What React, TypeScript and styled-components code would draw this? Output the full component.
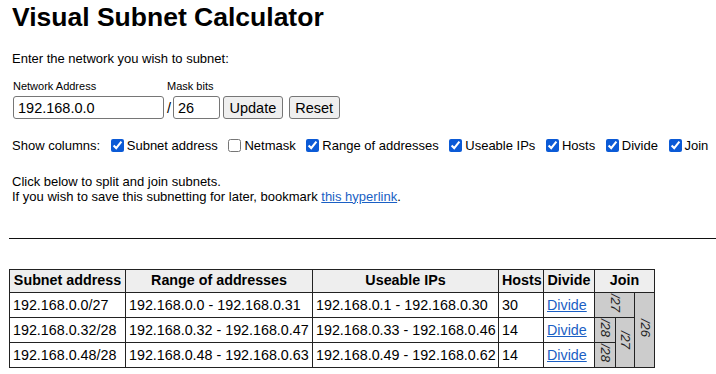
import React, { useState } from 'react';
import styled, { createGlobalStyle } from 'styled-components';

const GlobalStyle = createGlobalStyle`
  html, body {
    margin: 0;
    padding: 0;
    background: #fff;
    color: #000;
    font-family: "Liberation Sans", Arial, sans-serif;
  }
`;

const Page = styled.div`
  padding: 2px 0 0 9px;
`;

const Intro = styled.div`
  padding-left: 3px;
`;

const Title = styled.h1`
  margin: 0;
  font-size: 26.5px;
  line-height: 30px;
  font-weight: bold;
`;

const Para = styled.p<{ $top: number }>`
  margin: ${(p) => p.$top}px 0 0;
  font-size: 13px;
  line-height: 15px;
`;

const FormRow = styled.div`
  display: flex;
  align-items: flex-end;
  margin-top: 14px;
  padding-left: 1px;
`;

const Field = styled.div`
  display: flex;
  flex-direction: column;
`;

const FieldLabel = styled.label<{ $indent?: number }>`
  font-size: 11px;
  line-height: 13px;
  margin-bottom: 3.5px;
  padding-left: ${(p) => p.$indent ?? 0}px;
`;

const InputLine = styled.div`
  display: flex;
  align-items: center;
`;

const Slash = styled.span`
  font-size: 14.5px;
  width: 8px;
  margin-left: 1px;
  text-align: center;
`;

const TextInput = styled.input<{ $w: number }>`
  box-sizing: border-box;
  width: ${(p) => p.$w}px;
  height: 23px;
  padding: 0 4px;
  border: 1px solid #767676;
  border-radius: 3px;
  font-family: "Liberation Sans", Arial, sans-serif;
  font-size: 14.5px;
  color: #000;
  background: #fff;
`;

const Button = styled.button<{ $gap: number }>`
  box-sizing: border-box;
  height: 23px;
  margin-left: ${(p) => p.$gap}px;
  padding: 0 5.5px;
  border: 1px solid #767676;
  border-radius: 3px;
  background: #efefef;
  font-family: "Liberation Sans", Arial, sans-serif;
  font-size: 14.5px;
  color: #000;
`;

const ColumnsRow = styled.div`
  display: flex;
  align-items: center;
  margin-top: 19px;
  font-size: 13px;
  line-height: 15px;
`;

const Option = styled.label`
  display: flex;
  align-items: center;
  margin-left: 10.6px;
`;

const Check = styled.input`
  width: 13px;
  height: 13px;
  margin: 0 3px 0 0;
  accent-color: #0b5ad6;
`;

const Link = styled.a`
  color: #1a5fc4;
  text-decoration: underline;
`;

const Rule = styled.hr`
  margin: 34.5px 0 0;
  border: 0;
  border-top: 1px solid #111;
  height: 0;
`;

const Table = styled.table`
  margin-top: 30px;
  border-collapse: collapse;
  table-layout: fixed;
  width: 646px;
  font-size: 14.3px;
  line-height: 17px;
`;

const Head = styled.th`
  background: #eeeeee;
  border: 1px solid #222;
  padding: 2px 3px 3px;
  font-weight: bold;
  text-align: center;
  white-space: nowrap;
`;

const Cell = styled.td`
  border: 1px solid #222;
  padding: 4px 3px 3px;
  white-space: nowrap;
`;

const JoinCell = styled.td`
  background: #cccccc;
  border: 1px solid #222;
  padding: 0;
  text-align: center;
  vertical-align: middle;
`;

const Vertical = styled.span`
  display: inline-block;
  writing-mode: vertical-rl;
  font-size: 13px;
  font-style: italic;
  line-height: 14px;
  color: #222;
`;

const options = [
  { label: 'Subnet address', on: true },
  { label: 'Netmask', on: false },
  { label: 'Range of addresses', on: true },
  { label: 'Useable IPs', on: true },
  { label: 'Hosts', on: true },
  { label: 'Divide', on: true },
  { label: 'Join', on: true },
];

const colWidths = [116, 187, 186, 45, 51, 21, 19, 20];

const subnets = [
  { net: '192.168.0.0/27', range: '192.168.0.0 - 192.168.0.31', usable: '192.168.0.1 - 192.168.0.30', hosts: 30 },
  { net: '192.168.0.32/28', range: '192.168.0.32 - 192.168.0.47', usable: '192.168.0.33 - 192.168.0.46', hosts: 14 },
  { net: '192.168.0.48/28', range: '192.168.0.48 - 192.168.0.63', usable: '192.168.0.49 - 192.168.0.62', hosts: 14 },
];

const App: React.FC = () => {
  const [network, setNetwork] = useState('192.168.0.0');
  const [mask, setMask] = useState('26');

  const joins = [
    <>
      <JoinCell colSpan={2}><Vertical>/27</Vertical></JoinCell>
      <JoinCell rowSpan={3}><Vertical>/26</Vertical></JoinCell>
    </>,
    <>
      <JoinCell><Vertical>/28</Vertical></JoinCell>
      <JoinCell rowSpan={2}><Vertical>/27</Vertical></JoinCell>
    </>,
    <>
      <JoinCell><Vertical>/28</Vertical></JoinCell>
    </>,
  ];

  return (
    <Page>
      <GlobalStyle />
      <Intro>
        <Title>Visual Subnet Calculator</Title>
        <Para $top={18.5}>Enter the network you wish to subnet:</Para>

        <FormRow>
          <Field>
            <FieldLabel>Network Address</FieldLabel>
            <TextInput $w={151} value={network} onChange={(e) => setNetwork(e.target.value)} />
          </Field>
          <Field>
            <FieldLabel $indent={3}>Mask bits</FieldLabel>
            <InputLine>
              <Slash>/</Slash>
              <TextInput $w={47} value={mask} onChange={(e) => setMask(e.target.value)} />
            </InputLine>
          </Field>
          <Button $gap={3}>Update</Button>
          <Button $gap={6}>Reset</Button>
        </FormRow>

        <ColumnsRow>
          <span>Show columns:</span>
          {options.map((o) => (
            <Option key={o.label}>
              <Check type="checkbox" defaultChecked={o.on} />
              {o.label}
            </Option>
          ))}
        </ColumnsRow>

        <Para $top={20.5}>
          Click below to split and join subnets.
          <br />
          If you wish to save this subnetting for later, bookmark <Link href="#">this hyperlink</Link>.
        </Para>
      </Intro>

      <Rule />

      <Table>
        <colgroup>
          {colWidths.map((w, i) => (
            <col key={i} style={{ width: w }} />
          ))}
        </colgroup>
        <thead>
          <tr>
            <Head>Subnet address</Head>
            <Head>Range of addresses</Head>
            <Head>Useable IPs</Head>
            <Head>Hosts</Head>
            <Head>Divide</Head>
            <Head colSpan={3}>Join</Head>
          </tr>
        </thead>
        <tbody>
          {subnets.map((s, i) => (
            <tr key={s.net}>
              <Cell>{s.net}</Cell>
              <Cell>{s.range}</Cell>
              <Cell>{s.usable}</Cell>
              <Cell>{s.hosts}</Cell>
              <Cell><Link href="#">Divide</Link></Cell>
              {joins[i]}
            </tr>
          ))}
        </tbody>
      </Table>
    </Page>
  );
};

export default App;
